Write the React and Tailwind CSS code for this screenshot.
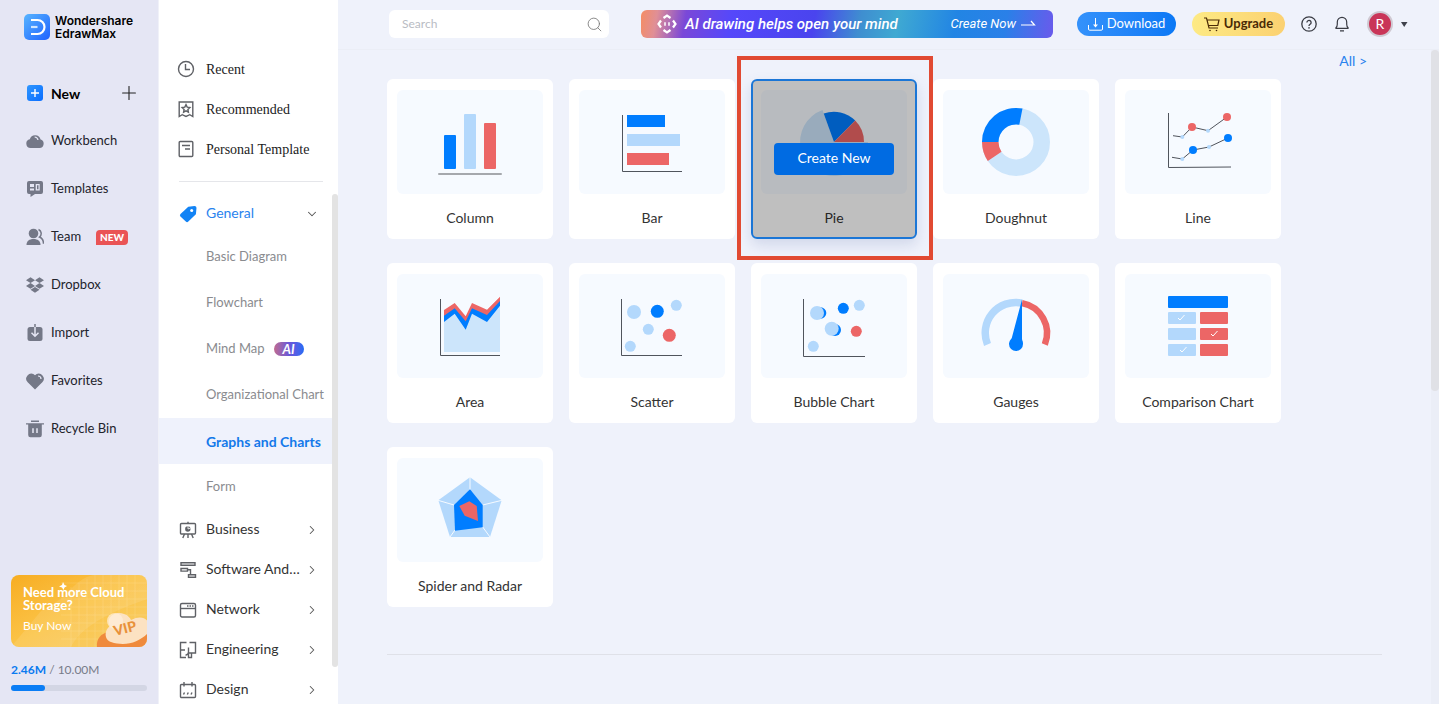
import React from "react";
import { FaDropbox } from "react-icons/fa";
import { ChevronDown, ChevronRight, Plus, Search } from "lucide-react";

const BLUE = "#007dff";
const LIGHT = "#b3d8fc";
const PALE = "#cce5fb";
const RED = "#ec6666";
const AXIS = "#50545c";

/* ---------- sidebar icons ---------- */

function NavIcon({ name }) {
  const p = { width: 18, height: 18, viewBox: "0 0 18 18", fill: "#747887", "aria-hidden": true };
  switch (name) {
    case "new":
      return (
        <svg {...p}>
          <defs>
            <linearGradient id="newFill" x1="0" y1="0" x2="1" y2="1">
              <stop offset="0" stopColor="#2f97ff" />
              <stop offset="1" stopColor="#0a6dff" />
            </linearGradient>
          </defs>
          <rect x="1" y="1" width="16" height="16" rx="3" fill="url(#newFill)" />
          <path d="M9 5v8M5 9h8" stroke="#fff" strokeWidth="1.4" />
        </svg>
      );
    case "cloud":
      return (
        <svg {...p}>
          <path d="M4.600 16A4.400 4.400 0 0 1 3.800 7.300 5.600 5.600 0 0 1 14.600 7.600 4.300 4.300 0 0 1 13.600 16z" />
          <path d="M8.600 5a3.600 3.600 0 0 1 3.400 3" fill="none" stroke="#e5e6f4" strokeWidth="1.2" />
        </svg>
      );
    case "templates":
      return (
        <svg {...p}>
          <path d="M3 1h12a2 2 0 0 1 2 2v9a2 2 0 0 1-2 2H9l-4.500 3V14H3a2 2 0 0 1-2-2V3a2 2 0 0 1 2-2z" />
          <path d="M4 4h4v3H4zM4 8.500h4v2H4zM9.700 4h4v6.500h-4z" fill="#e5e6f4" />
          <path d="M11 5.300h1.500v4H11z" />
        </svg>
      );
    case "team":
      return (
        <svg {...p}>
          <circle cx="7.500" cy="5.500" r="4.800" />
          <path d="M0.500 17c0-4 2.800-6 7-6s7 2 7 6z" />
          <path d="M12.500 1.500a4.400 4.400 0 0 1 1 7.500c2.600 1 4 3.200 4 6.800" fill="none" stroke="#747887" strokeWidth="1.500" />
        </svg>
      );
    case "dropbox":
      return <FaDropbox size={18} color="#747887" aria-hidden="true" />;
    case "import":
      return (
        <svg {...p}>
          <rect x="1.500" y="3" width="15" height="14" rx="2.500" />
          <path d="M9 3v9M5.500 8.800 9 12.200l3.500-3.400" fill="none" stroke="#e5e6f4" strokeWidth="1.500" />
          <path d="M9 0v3" stroke="#747887" strokeWidth="1.500" />
        </svg>
      );
    case "heart":
      return (
        <svg {...p}>
          <path d="M9 17.500 1.700 10.200A5 5 0 0 1 1.500 3.400 5 5 0 0 1 9 3.200a5 5 0 0 1 7.500.2 5 5 0 0 1-.2 6.800z" />
          <path d="M12 4a3 3 0 0 1 3 3" fill="none" stroke="#e5e6f4" strokeWidth="1.200" />
        </svg>
      );
    default:
      return (
        <svg {...p}>
          <path d="M5 .6h8v1.300H5zM0 3.300h18v1.300H0z" />
          <path d="M2.200 4h13.600v11a2.200 2.200 0 0 1-2.200 2.200H4.400A2.200 2.200 0 0 1 2.200 15z" />
          <path d="M7 8.300v4.700M11 8.300v4.700" stroke="#e5e6f4" strokeWidth="1.500" />
        </svg>
      );
  }
}

function LineIcon({ name }) {
  const p = {
    width: 18,
    height: 18,
    viewBox: "0 0 18 18",
    fill: "none",
    stroke: "#5f6166",
    strokeWidth: 1.4,
    "aria-hidden": true,
    className: "shrink-0",
  };
  switch (name) {
    case "recent":
      return (
        <svg {...p}>
          <circle cx="9" cy="9" r="7.500" />
          <path d="M8.500 4v5.500H13" />
        </svg>
      );
    case "recommended":
      return (
        <svg {...p}>
          <path d="M2.200 2h13.600v14.500l-3-1.800-3.800 1.800-3.800-1.800-3 1.800z" />
          <path d="m9 4.600 1.200 2.500 2.700.4-2 1.900.5 2.700L9 10.800l-2.400 1.300.5-2.700-2-1.900 2.700-.4z" />
        </svg>
      );
    case "personal":
      return (
        <svg {...p}>
          <rect x="2.200" y="1.500" width="13.600" height="15" rx="1" />
          <path d="M5 5.500h8M8 9h5" />
        </svg>
      );
    case "general":
      return (
        <svg {...p} stroke="none">
          <path d="M9.300 1.700 15.500 1a2 2 0 0 1 2 2l-.6 6.200-7.600 7.400a1.800 1.800 0 0 1-2.500 0L1.500 11.400a1.800 1.800 0 0 1 0-2.500z" fill="#1283f5" />
          <circle cx="12.700" cy="5.600" r="1.500" fill="#fff" />
        </svg>
      );
    case "business":
      return (
        <svg {...p}>
          <rect x="1.500" y="2.500" width="15" height="10.500" rx="1" />
          <path d="M9 .8v1.700M9 13v4M5.500 13l-1.700 4M12.500 13l1.700 4" />
          <circle cx="8.800" cy="8" r="2.700" fill="#5f6166" stroke="none" />
          <path d="M9 8V5M9 8l2.600-1" stroke="#fff" strokeWidth="0.800" />
        </svg>
      );
    case "software":
      return (
        <svg {...p}>
          <path d="M2 1.700h14v2.600H2zM2 7.500h6.500v2.600H2zM9.500 13.700h7v2.600h-7zM8.500 8.800h3v4.900" />
        </svg>
      );
    case "network":
      return (
        <svg {...p}>
          <rect x="1.500" y="2.500" width="15" height="13.500" rx="1.500" />
          <path d="M1.500 7.500h15" />
          <path d="M8 5h1.500M10.500 5H12M13 5h1.500" />
        </svg>
      );
    case "engineering":
      return (
        <svg {...p}>
          <path d="M7.500 1.500h-6v15h5.500M1.500 9H6M10.500 1.500h6V12h-7M9.500 6.500V11a3 3 0 0 1-2.500 3h-.5M9.500 12v4.500h3V12" />
        </svg>
      );
    default:
      return (
        <svg {...p}>
          <rect x="1.500" y="3.500" width="15" height="13" rx="1" />
          <path d="M5 1v4.500M13 1v4.500M4.500 13.500l1-2M8.300 13.500l1-2M12 13.500l1-2" />
        </svg>
      );
  }
}

/* ---------- chart thumbnails, drawn on a 146 x 104 stage ---------- */

function Axes({ x = 43, top = 25, bottom = 81, right = 103 }) {
  return <path d={`M${x}.5 ${top}V${bottom}.5H${right}`} fill="none" stroke={AXIS} strokeWidth="1" />;
}

const CHARTS = {
  Column: (
    <>
      <rect x="47" y="45" width="12" height="34" rx="1" fill={BLUE} />
      <rect x="67" y="24" width="12" height="55" rx="1" fill={LIGHT} />
      <rect x="87" y="33" width="12" height="46" rx="1" fill={RED} />
      <rect x="41" y="83" width="64" height="2" rx="1" fill="#a5a8ad" />
    </>
  ),
  Bar: (
    <>
      <Axes />
      <rect x="48" y="25" width="38" height="12" fill={BLUE} />
      <rect x="48" y="44" width="53" height="12" fill={LIGHT} />
      <rect x="48" y="63" width="42" height="12" fill={RED} />
    </>
  ),
  Pie: (
    <>
      <path d="M73 52 61.500 20A34 34 0 1 0 107 52z" fill={PALE} />
      <path d="M73 52 62.700 23.500A30 30 0 0 1 94.200 30.500z" fill={BLUE} />
      <path d="M73 52 94.200 30.500A30 30 0 0 1 103 52z" fill={RED} />
    </>
  ),
  Doughnut: (
    <>
      <circle cx="73" cy="52" r="25.750" fill="none" stroke={PALE} strokeWidth="16.500" />
      <path d="M39 52A34 34 0 0 1 79.500 18.600L76.300 34.800A17.500 17.500 0 0 0 55.500 52z" fill={BLUE} />
      <path d="M39 52A34 34 0 0 0 44.800 71L58.500 61.800A17.500 17.500 0 0 1 55.500 52z" fill={RED} />
    </>
  ),
  Line: (
    <>
      <path d="M43.500 23v54.500l62.500-.5" fill="none" stroke={AXIS} />
      <path d="M48 45.700 57.300 47 67 37l16 3.700L102 27M47 67.300 57.300 69 68 60l16-3 19-9" fill="none" stroke={AXIS} />
      <g fill={LIGHT}>
        <circle cx="57.300" cy="47" r="2" />
        <circle cx="83" cy="40.700" r="2" />
        <circle cx="57.300" cy="69" r="2" />
        <circle cx="84" cy="57" r="2" />
      </g>
      <g fill={RED}>
        <circle cx="67" cy="37" r="4" />
        <circle cx="102" cy="27" r="4" />
      </g>
      <g fill={BLUE}>
        <circle cx="68" cy="60" r="4" />
        <circle cx="103" cy="48" r="4" />
      </g>
    </>
  ),
  Area: (
    <>
      <Axes />
      <path d="M47 36 57.700 29l11 13.300L75 29l15 6.700 13-13V78H47z" fill={RED} />
      <path d="M47 41.700 57.700 34.300l11 13L75 34.300 90 41l13-14v51H47z" fill={BLUE} />
      <path d="M47 48 57.700 39.700l11 16L75 39.700 90 48l13-16.300V78H47z" fill={PALE} />
    </>
  ),
  Scatter: (
    <>
      <Axes x={42} />
      <circle cx="55" cy="38" r="7" fill={LIGHT} />
      <circle cx="78.300" cy="37.300" r="6.500" fill={BLUE} />
      <circle cx="97.300" cy="31.300" r="5.500" fill={LIGHT} />
      <circle cx="69.300" cy="55.300" r="5.500" fill={LIGHT} />
      <circle cx="90.300" cy="61.300" r="6.500" fill={RED} />
      <circle cx="51.300" cy="72.300" r="5.500" fill={LIGHT} />
    </>
  ),
  "Bubble Chart": (
    <>
      <Axes x={42} bottom={82} right={104} />
      <circle cx="59.500" cy="39" r="5.800" fill={BLUE} />
      <circle cx="56" cy="39" r="7" fill={LIGHT} />
      <circle cx="82.300" cy="34.300" r="5.500" fill={BLUE} />
      <circle cx="98.300" cy="31.300" r="5.500" fill={LIGHT} />
      <circle cx="74" cy="56" r="6" fill={BLUE} />
      <circle cx="70.700" cy="54.700" r="7" fill={LIGHT} />
      <circle cx="95.300" cy="57.300" r="5.500" fill={RED} />
      <circle cx="52.300" cy="72.300" r="5.500" fill={LIGHT} />
    </>
  ),
  Gauges: (
    <>
      <path d="M44.500 70.500A30.500 30.500 0 0 1 79 29.100" fill="none" stroke={LIGHT} strokeWidth="7.500" />
      <path d="M79 29.100A30.500 30.500 0 0 1 101.800 70.500" fill="none" stroke={RED} strokeWidth="6.500" />
      <path d="M79 25.500 79 65 80 70H66L68.500 65z" fill={BLUE} />
      <circle cx="73" cy="70" r="7" fill={BLUE} />
    </>
  ),
  "Comparison Chart": (
    <>
      <rect x="43" y="22" width="60" height="12" rx="1" fill={BLUE} />
      {[38, 54, 70].map((y) => (
        <React.Fragment key={y}>
          <rect x="43" y={y} width="28" height="12" rx="1" fill={LIGHT} />
          <rect x="75" y={y} width="28" height="12" rx="1" fill={RED} />
        </React.Fragment>
      ))}
      <path d="m53 44 2 2 4.500-5M86 60l2 2 4.500-5M55 76l2 2 4.500-5" fill="none" stroke="#fff" />
    </>
  ),
  "Spider and Radar": (
    <>
      <path d="M73 19.300 104.700 42.300 93 79H53L41.300 42.300z" fill={LIGHT} />
      <path d="M73 19v13M105 42.300 85.700 47M93 79l-7.300-10M53 79l5-7M41 42.300 57 47" stroke="#f6faff" strokeWidth="1" />
      <path d="M73 31.300 85.700 47v22.300L58 72.700 57 47z" fill={BLUE} />
      <path d="M62.300 48 72.300 43.300 79.700 48 81 63 67.700 57.700z" fill={RED} />
    </>
  ),
};

function ChartCard({ name, active }) {
  return (
    <li className="relative w-[166px] rounded-md bg-white px-[10px] pt-[11px] pb-[11px]">
      <div className="h-[104px] overflow-hidden rounded-md bg-[#f6faff]">
        <svg viewBox="0 0 146 104" className="h-[104px] w-[146px]" aria-hidden="true">
          {CHARTS[name]}
        </svg>
      </div>
      <p className="pt-[14px] text-center text-[14px] leading-5 text-[#333]">{name}</p>
      {active && (
        <>
          <div className="absolute inset-0 flex justify-center rounded-md border-2 border-[#1b76d6] bg-black/25 pt-[62px] shadow-[0_6px_14px_rgba(90,110,170,0.2)]">
            <button
              type="button"
              className="h-8 w-[120px] rounded bg-[#006be2] pb-[3px] text-[14px] text-white"
            >
              Create New
            </button>
          </div>
          <div className="pointer-events-none absolute -top-[23px] -right-[16px] -bottom-[21px] -left-[14px] z-10 border-4 border-[#e14a32]" />
        </>
      )}
    </li>
  );
}

/* ---------- left sidebar ---------- */

const NAV = [
  ["new", "New"],
  ["cloud", "Workbench"],
  ["templates", "Templates"],
  ["team", "Team"],
  ["dropbox", "Dropbox"],
  ["import", "Import"],
  ["heart", "Favorites"],
  ["trash", "Recycle Bin"],
];

function Logo() {
  return (
    <a href="#home" className="flex items-center gap-[5px] pl-6">
      <svg width="26" height="26" viewBox="0 0 26 26" aria-hidden="true">
        <defs>
          <linearGradient id="logoFill" x1="0" y1="0" x2="1" y2="1">
            <stop offset="0" stopColor="#58b5ff" />
            <stop offset="1" stopColor="#1e62ff" />
          </linearGradient>
        </defs>
        <rect width="26" height="26" rx="5" fill="url(#logoFill)" />
        <path d="M7 6h6.500a7 7 0 0 1 0 14H7" fill="none" stroke="#fff" strokeWidth="2.200" />
        <path d="M7 13h6.500" stroke="#cfe6ff" strokeWidth="2.200" />
      </svg>
      <span className="font-[Inter,sans-serif] text-[12px] leading-[13px] font-semibold text-black">
        Wondershare
        <br />
        EdrawMax
      </span>
    </a>
  );
}

function StorageCard() {
  return (
    <a
      href="#storage"
      className="relative block h-[72px] overflow-hidden rounded-lg bg-linear-to-br from-[#f7ad20] via-[#fbc447] to-[#f7cf6c] px-3 pt-[11px] text-white"
    >
      <svg className="absolute inset-0 h-full w-full" viewBox="0 0 136 72" preserveAspectRatio="xMaxYMax slice" aria-hidden="true">
        <path d="M30 36C62 20 60 6 82 0h54v24C108 34 72 48 60 72H0z" fill="#fff" opacity=".1" />
        <path d="M60 12v60M68 8v64M76 4v68M84 0v72M92 0v72M100 0v72M108 0v72M116 0v72M124 0v72M50 8h86M50 16h86M50 24h86M50 32h86M50 40h86M50 48h86M50 56h86M50 64h86" stroke="#fff" strokeWidth=".5" opacity=".22" />
        <path d="m52 7 1.500 3 2.500 1-2.500 1.500-1 2.500-1.500-2.500-3-1 3-1.500z" fill="#fff" />
        <path d="M86 72c-1-8 4-14 12-15l38-4v19z" fill="#ef8a3c" />
        <path d="M100 67c-7-2-7-12-1-16-5-8 5-16 14-12 4 1 6 4 7 6 8-4 14-3 17 2v11c-9 9-22 14-37 9z" fill="#fce2c2" />
        <circle cx="104" cy="46" r="8" fill="#fff0dc" opacity=".7" />
        <text x="104" y="61" transform="rotate(-14 104 61)" fill="#e8913a" fontFamily="Lato, sans-serif" fontSize="14" fontWeight="900">
          VIP
        </text>
      </svg>
      <span className="relative block text-[13px] leading-[13px] font-bold">
        Need more Cloud
        <br />
        Storage?
      </span>
      <span className="relative mt-[7px] block text-[12px] leading-[14px]">Buy Now</span>
    </a>
  );
}

function Sidebar() {
  return (
    <aside className="flex w-[158px] shrink-0 flex-col bg-[#e5e6f4] pt-[14px] pb-[13px]">
      <Logo />
      <nav className="mt-[29px]">
        {NAV.map(([icon, label]) => (
          <div key={label} className="flex h-12 items-center pr-[18px] pl-[26px]">
            <a
              href={"#" + icon}
              className={
                label === "New"
                  ? "flex flex-1 items-center gap-[7px] text-[14px] font-bold text-black"
                  : "flex flex-1 items-center gap-[7px] text-[13px] text-[#22232b]"
              }
            >
              <NavIcon name={icon} />
              {label}
              {label === "Team" && (
                <span className="ml-2 h-[15px] w-8 rounded-tl-[4px] rounded-tr-[4px] rounded-br-[4px] bg-[#ea5455] text-center text-[10px] leading-[15px] font-black text-white">
                  NEW
                </span>
              )}
            </a>
            {label === "New" && (
              <button type="button" aria-label="Create new document">
                <Plus size={22} strokeWidth={1.200} color="#222" />
              </button>
            )}
          </div>
        ))}
      </nav>
      <div className="mt-auto px-[11px]">
        <StorageCard />
        <p className="mt-[14px] text-[12px] leading-[18px] text-[#777b88]">
          <span className="font-bold text-[#0a7af0]">2.46M</span> / 10.00M
        </p>
        <div className="mt-[6px] h-[6px] rounded-full bg-[#d3d6e4]">
          <div className="h-[6px] w-1/4 rounded-full bg-[#0a7df5]" />
        </div>
      </div>
    </aside>
  );
}

/* ---------- category panel ---------- */

const SUBS = ["Basic Diagram", "Flowchart", "Mind Map", "Organizational Chart", "Graphs and Charts", "Form"];
const GROUPS = [
  ["business", "Business"],
  ["software", "Software And…"],
  ["network", "Network"],
  ["engineering", "Engineering"],
  ["design", "Design"],
];

function CategoryPanel() {
  return (
    <div className="flex w-[180px] shrink-0 flex-col border-l border-[#f0f1f8] bg-white pt-[49px]">
      <nav className="pl-[18px]">
        {[
          ["recent", "Recent"],
          ["recommended", "Recommended"],
          ["personal", "Personal Template"],
        ].map(([icon, label]) => (
          <a
            key={icon}
            href={"#" + icon}
            className="flex h-10 items-center gap-[11px] font-['Liberation_Serif',serif] text-[14px] text-[#222]"
          >
            <LineIcon name={icon} />
            {label}
          </a>
        ))}
      </nav>
      <div className="mt-3 mr-[15px] mb-3 ml-5 h-px shrink-0 bg-[#e5e6ea]" />
      <div className="flex min-h-0 flex-1">
        <div className="min-w-0 flex-1 overflow-hidden">
          <button type="button" className="flex h-10 w-full items-center gap-[9px] pr-[13px] pl-5 text-[14px] text-[#2a83ee]">
            <LineIcon name="general" />
            <span className="flex-1 pb-[3px] text-left">General</span>
            <ChevronDown size={14} strokeWidth={1.800} color="#555" className="shrink-0" />
          </button>
          {SUBS.map((label) => (
            <a
              key={label}
              href={"#" + label.toLowerCase().replace(/ /g, "-")}
              className={
                label === "Graphs and Charts"
                  ? "flex h-[46px] items-center bg-[#eff2fc] pl-[47px] text-[14px] font-bold whitespace-nowrap text-[#1479ea]"
                  : "flex h-[46px] items-center pl-[47px] text-[13px] whitespace-nowrap text-[#8a8b8f]"
              }
            >
              {label}
              {label === "Mind Map" && (
                <span className="ml-[9px] h-[14px] w-[30px] rounded-full bg-linear-to-r from-[#c0688f] via-[#6a55d8] to-[#1f6bf5] text-center text-[13px] leading-[14px] font-bold text-white italic">
                  AI
                </span>
              )}
            </a>
          ))}
          {GROUPS.map(([icon, label]) => (
            <button
              key={icon}
              type="button"
              className="flex h-10 w-full items-center gap-[9px] pr-[13px] pl-5 text-[14px] whitespace-nowrap text-[#333]"
            >
              <LineIcon name={icon} />
              <span className="min-w-0 flex-1 pb-[3px] text-left">{label}</span>
              <ChevronRight size={14} strokeWidth={1.800} color="#555" className="shrink-0" />
            </button>
          ))}
        </div>
        <div className="w-[6px]">
          <div className="h-[473px] rounded-full bg-[#e3e3e3]" />
        </div>
      </div>
    </div>
  );
}

/* ---------- header ---------- */

function Header() {
  return (
    <header className="flex h-[50px] shrink-0 items-center border-b border-[#ebeef6] pr-[31px] pb-px pl-[51px]">
      <label className="flex h-7 w-[220px] shrink-0 items-center rounded-md bg-white pr-[6px] pl-[13px]">
        <input
          type="search"
          aria-label="Search"
          placeholder="Search"
          className="w-full min-w-0 flex-1 bg-transparent text-[12px] outline-none placeholder:text-[#b9bcc4]"
        />
        <Search size={17} strokeWidth={1.200} color="#777" />
      </label>

      <a
        href="#ai-drawing"
        className="ml-8 flex h-7 min-w-0 flex-1 items-center rounded-md bg-[linear-gradient(100deg,#f58d63_0%,#e08f96_4%,#7a48d8_11%,#5548fa_22%,#4a44ee_42%,#3f8ed0_53%,#3fa9d2_62%,#2285e4_76%,#2a80e8_88%,#6a5aec_100%)] pr-[17px] pl-4 whitespace-nowrap text-white italic"
      >
        <svg width="20" height="20" viewBox="0 0 20 20" fill="none" stroke="#fff" strokeWidth="2.200" aria-hidden="true">
          <path d="M6.500 4 10 1.500 13.500 4M6.500 16l3.500 2.500 3.500-2.500M4 6.500 1.500 10 4 13.500M16 6.500l2.500 3.500-2.500 3.500" />
          <path d="M8 8.300v3.400M12 8.300v3.400" strokeWidth="1.500" />
        </svg>
        <span className="ml-2 font-[Roboto,sans-serif] text-[15px] font-medium">
          AI drawing helps open your mind
        </span>
        <span className="ml-auto font-[Roboto,sans-serif] text-[13px]">Create Now</span>
        <svg width="15" height="8" viewBox="0 0 15 8" fill="none" stroke="#fff" strokeWidth="1.200" className="ml-[5px]" aria-hidden="true">
          <path d="M0 5h13.500L10 1" />
        </svg>
      </a>

      <button
        type="button"
        className="ml-6 flex h-6 w-[99px] shrink-0 items-center justify-center gap-1 rounded-full bg-linear-to-r from-[#3492fb] to-[#0a78f5] text-[13px] text-white"
      >
        <svg width="15" height="13" viewBox="0 0 15 13" fill="none" stroke="#fff" aria-hidden="true">
          <path d="M7.500 0v9M.5 7v4a1.200 1.200 0 0 0 1.200 1.200h11.600A1.200 1.200 0 0 0 14.500 11V7" />
          <path d="M5 6.500h5L7.500 9.500z" fill="#fff" stroke="none" />
        </svg>
        Download
      </button>
      <button
        type="button"
        className="ml-4 flex h-6 w-[93px] shrink-0 items-center justify-center gap-1 rounded-full bg-linear-to-r from-[#fdea84] to-[#fbd171] text-[13px] font-bold text-[#4a2a05]"
      >
        <svg width="16" height="15" viewBox="0 0 16 15" fill="none" stroke="#4a2a05" strokeWidth="1.200" aria-hidden="true">
          <path d="M0 1h2.500L5 11h9M3 3h12l-1.200 5.500H4.500" />
          <circle cx="6" cy="13.500" r=".8" fill="#4a2a05" stroke="none" />
          <circle cx="12.500" cy="13.500" r=".8" fill="#4a2a05" stroke="none" />
        </svg>
        Upgrade
      </button>
      <button type="button" aria-label="Help" className="ml-4">
        <svg width="16" height="16" viewBox="0 0 16 16" fill="none" stroke="#3a3c44" strokeWidth="1.300">
          <circle cx="8" cy="8" r="7.200" />
          <path d="M5.900 6.500a2.100 2.100 0 1 1 3.200 1.800c-.8.500-1.100.8-1.100 1.700" />
          <circle cx="8" cy="11.900" r=".8" fill="#3a3c44" stroke="none" />
        </svg>
      </button>
      <button type="button" aria-label="Notifications" className="ml-[17px]">
        <svg width="16" height="16" viewBox="0 0 16 16" fill="none" stroke="#3a3c44" strokeWidth="1.200">
          <path d="M1.500 12.300c1.500-.8 1.800-1.800 1.800-4V6a4.700 4.700 0 0 1 9.400 0v2.300c0 2.200.3 3.200 1.800 4zM6 14.900h4" />
        </svg>
      </button>
      <button type="button" aria-label="Account" className="ml-[17px] flex items-center gap-[7px]">
        <span className="h-[26px] w-[26px] rounded-full border-2 border-[#cfc9d2] bg-[#c93558] text-center text-[14px] leading-[22px] text-white">
          R
        </span>
        <svg width="8" height="5" viewBox="0 0 8 5" fill="#3f424b" aria-hidden="true">
          <path d="M1 0h6.500L4.200 5z" />
        </svg>
      </button>
    </header>
  );
}

export default function App() {
  return (
    <div className="flex h-screen overflow-hidden bg-[#eff2fb] font-[Lato,sans-serif]">
      <Sidebar />
      <CategoryPanel />
      <div className="flex min-w-0 flex-1 flex-col">
        <Header />
        <div className="flex min-h-0 flex-1">
          <main className="min-w-0 flex-1 overflow-hidden px-[49px]">
            <div className="flex h-[29px] justify-end pr-[15px]">
              <a href="#all" className="text-[14px] leading-[22px] text-[#2a83ee]">
                All &gt;
              </a>
            </div>
            <ul className="flex flex-wrap gap-x-4 gap-y-6">
              {Object.keys(CHARTS).map((name) => (
                <ChartCard key={name} name={name} active={name === "Pie"} />
              ))}
            </ul>
            <hr className="mt-[47px] border-[#dfe1e8]" />
          </main>
          <div className="w-2 bg-[#ebeef7]">
            <div className="h-[341px] rounded-full bg-[#e0e1e6]" />
          </div>
        </div>
      </div>
    </div>
  );
}
